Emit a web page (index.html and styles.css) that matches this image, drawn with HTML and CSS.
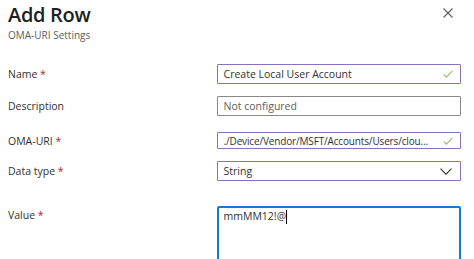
FILE: index.html
```html
<!DOCTYPE html>
<html>
<head>
<meta charset="utf-8">
<link rel="stylesheet" href="styles.css">
</head>
<body>
<div class="panel">
  <header class="head">
    <div class="titles">
      <h1 class="title">Add Row</h1>
      <div class="subtitle">OMA-URI Settings</div>
    </div>
    <svg class="close" width="10" height="10" viewBox="0 0 10 10"><path d="M0.5 0.5L9.5 9.5M9.5 0.5L0.5 9.5" stroke="#605e5c" stroke-width="1.1" fill="none"/></svg>
  </header>

  <div class="row r-name">
    <label class="lbl">Name <span class="req">*</span></label>
    <div class="field valid">
      <span class="val">Create Local User Account</span>
      <svg class="ico" width="10" height="8" viewBox="0 0 10 8"><path d="M0.6 4.3L3.4 7.1L9.4 0.8" stroke="#8cc46c" stroke-width="1.1" fill="none"/></svg>
    </div>
  </div>

  <div class="row r-desc">
    <label class="lbl">Description</label>
    <div class="field plain">
      <span class="val ph">Not configured</span>
    </div>
  </div>

  <div class="row r-uri">
    <label class="lbl">OMA-URI <span class="req">*</span></label>
    <div class="field valid">
      <span class="val uri">./Device/Vendor/MSFT/Accounts/Users/clou...</span>
      <svg class="ico" width="10" height="8" viewBox="0 0 10 8"><path d="M0.6 4.3L3.4 7.1L9.4 0.8" stroke="#8cc46c" stroke-width="1.1" fill="none"/></svg>
    </div>
  </div>

  <div class="row r-type">
    <label class="lbl">Data type <span class="req">*</span></label>
    <div class="field valid">
      <span class="val">String</span>
      <svg class="ico chev" width="12" height="7" viewBox="0 0 12 7"><path d="M0.5 0.7L6 6.2L11.5 0.7" stroke="#323130" stroke-width="1.1" fill="none"/></svg>
    </div>
  </div>

  <div class="row r-value">
    <label class="lbl">Value <span class="req">*</span></label>
    <div class="area">
      <span class="val">mmMM12!@</span><span class="caret"></span>
    </div>
  </div>
</div>
</body>
</html>
```

FILE: styles.css
```css
* { box-sizing: border-box; }
html, body { margin: 0; padding: 0; background: #fff; overflow: hidden; }
body {
  font-family: "Open Sans", "Noto Sans", "Liberation Sans", sans-serif;
  color: #323130;
  width: 474px;
  height: 259px;
}
.panel { padding: 0 13px 0 8px; height: 259px; overflow: hidden; }
.head {
  display: flex;
  justify-content: space-between;
  align-items: flex-start;
  height: 56px;
}
.title {
  margin: 0;
  font-size: 20px;
  font-weight: 600;
  line-height: 28px;
  padding-top: 1px;
  letter-spacing: -0.3px;
  color: #201f1e;
}
.subtitle {
  font-size: 10px;
  line-height: 14px;
  color: #605e5c;
  margin-top: -1px;
}
.close { margin-top: 8px; margin-right: 8px; }

.row { display: flex; align-items: center; }
.lbl {
  width: 209px;
  font-size: 10.5px;
  color: #323130;
}
.req { color: #a4262c; }
.field {
  width: 245px;
  height: 20px;
  border: 1px solid #8a6fbf;
  display: flex;
  align-items: center;
  justify-content: space-between;
  gap: 3px;
  padding: 0 7px 0 6px;
  border-radius: 1px;
}
.field.plain { border-color: #8a8886; }
.val {
  font-size: 10.5px;
  color: #323130;
  white-space: nowrap;
}
.val.uri { font-size: 10px; letter-spacing: -0.15px; }
.ph { color: #605e5c; }
.ico { flex: none; }
.chev { margin-right: 1px; }

.r-name { margin-top: 8px; }
.r-desc { margin-top: 12px; }
.r-uri { margin-top: 16px; height: 17px; }
.r-uri .field { height: 17px; }
.r-type { margin-top: 12px; }
.r-value { margin-top: 25px; align-items: flex-start; }
.r-value .lbl { padding-top: 2px; }
.area {
  width: 245px;
  height: 60px;
  border: 2px solid #1a78d0;
  border-radius: 2px;
  padding: 1px 5px;
  display: flex;
  align-items: flex-start;
}
.caret {
  display: inline-block;
  width: 1px;
  height: 14px;
  background: #000;
  margin-top: 1px;
}
```
